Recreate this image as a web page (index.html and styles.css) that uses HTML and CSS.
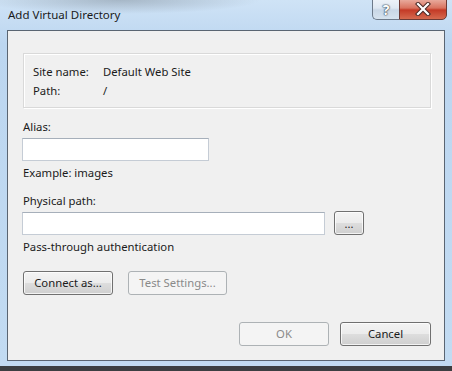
FILE: index.html
```html
<!DOCTYPE html>
<html>
<head>
<meta charset="utf-8">
<link rel="stylesheet" href="styles.css">
</head>
<body>
<div class="window">
  <div class="titlebar">
    <div class="title">Add Virtual Directory</div>
    <div class="caption-buttons">
      <div class="cap-btn help">?</div>
      <div class="cap-btn close">
        <svg width="16" height="14" viewBox="0 0 16 14">
          <path d="M3 2 L13 12 M13 2 L3 12" stroke="#4a2a26" stroke-width="4.2" stroke-linecap="square"/>
          <path d="M3 2 L13 12 M13 2 L3 12" stroke="#ffffff" stroke-width="2.2" stroke-linecap="square"/>
        </svg>
      </div>
    </div>
  </div>
  <div class="client">
    <div class="info">
      <div class="info-label">Site name:</div><div>Default Web Site</div>
      <div class="info-label">Path:</div><div>/</div>
    </div>
    <div class="label alias-label">Alias:</div>
    <div class="textbox alias-box"></div>
    <div class="label example">Example: images</div>
    <div class="label phys-label">Physical path:</div>
    <div class="path-row">
      <div class="textbox path-box"></div>
      <div class="btn browse">...</div>
    </div>
    <div class="label pass">Pass-through authentication</div>
    <div class="btn-row">
      <div class="btn connect">Connect as...</div>
      <div class="btn disabled test">Test Settings...</div>
    </div>
    <div class="footer">
      <div class="btn disabled ok">OK</div>
      <div class="btn cancel">Cancel</div>
    </div>
  </div>
</div>
</body>
</html>
```
FILE: styles.css
```css
html, body {
  margin: 0;
  padding: 0;
}
body {
  width: 452px;
  height: 371px;
  background: #3c3f42;
  overflow: hidden;
  font-family: "Noto Sans", "Open Sans", sans-serif;
  font-size: 11.3px;
  color: #1b1b1b;
}
.window {
  width: 452px;
  height: 366px;
  background:
    radial-gradient(ellipse 140px 14px at 120px 0px, rgba(90,100,110,0.35), rgba(90,100,110,0) 100%),
    linear-gradient(180deg, #cfe3f6 0%, #bcd6f0 12%, #c2dbf2 100%);
  display: flex;
  flex-direction: column;
}
.titlebar {
  height: 30px;
  display: flex;
  justify-content: space-between;
  align-items: flex-start;
}
.title {
  padding-left: 8px;
  line-height: 30px;
  font-size: 11.5px;
  color: #1a1a1a;
}
.caption-buttons {
  display: flex;
  margin-right: 5px;
  margin-top: -2px;
}
.cap-btn {
  height: 20px;
  border: 1px solid #6d7a8a;
  display: flex;
  align-items: center;
  justify-content: center;
}
.help {
  width: 26px;
  border-right: none;
  border-radius: 0 0 0 5px;
  background: linear-gradient(180deg, #eef3f9 0%, #dfe8f2 45%, #c9d7e6 55%, #d6e3ef 100%);
  color: #ffffff;
  font-weight: bold;
  font-size: 14px;
  text-shadow: 0 0 1px #3c4a5a, 0 0 1px #3c4a5a, 0 0 2px #3c4a5a;
}
.close {
  width: 46px;
  border-radius: 0 0 5px 0;
  border-color: #6d3a35;
  background: linear-gradient(180deg, #eab0a3 0%, #d9735f 45%, #c43a26 55%, #d66a4f 100%);
}
.client {
  margin: 0 7px;
  height: 329px;
  border: 1px solid #5a6572;
  background: #f0f0f0;
  padding: 0 13px 0 15px;
  display: flex;
  flex-direction: column;
}
.info {
  margin-top: 22px;
  width: 397px;
  height: 45px;
  border: 1px solid #d9d9d9;
  box-shadow: inset 1px 1px 0 #ffffff, 1px 1px 0 #ffffff;
  padding: 8px 0 0 9px;
  box-sizing: content-box;
  display: grid;
  grid-template-columns: 70px 1fr;
  grid-auto-rows: 19px;
  line-height: 19px;
}
.label {
  line-height: 16px;
  height: 16px;
}
.alias-label { margin-top: 11px; }
.textbox {
  background: #ffffff;
  border: 1px solid #c5ccd5;
  border-top-color: #a6afba;
  box-sizing: border-box;
}
.alias-box {
  margin-top: 3px;
  margin-left: -1px;
  width: 187px;
  height: 23px;
}
.example { margin-top: 4px; }
.phys-label { margin-top: 12px; }
.path-row {
  margin-top: 2px;
  display: flex;
  align-items: flex-start;
  gap: 9px;
}
.path-box {
  margin-left: -1px;
  width: 303px;
  height: 23px;
  margin-top: 1px;
}
.pass { margin-top: 4px; }
.btn {
  height: 24px;
  box-sizing: border-box;
  border: 1px solid #707070;
  border-radius: 3px;
  background: linear-gradient(180deg, #f3f3f3 0%, #ececec 48%, #dddddd 52%, #cfcfcf 100%);
  box-shadow: inset 0 0 0 1px rgba(255,255,255,0.75);
  display: flex;
  align-items: center;
  justify-content: center;
  line-height: 16px;
  color: #1b1b1b;
}
.browse {
  width: 30px;
  font-size: 11px;
  line-height: 10px;
  padding-top: 2px;
}
.btn.disabled {
  border-color: #adb2b5;
  background: #f4f4f4;
  color: #8a8a8a;
  box-shadow: none;
}
.btn-row {
  margin-top: 16px;
  display: flex;
  gap: 15px;
}
.connect { width: 90px; }
.test { width: 99px; }
.footer {
  margin-top: 27px;
  display: flex;
  justify-content: flex-end;
  gap: 11px;
}
.ok { width: 90px; }
.cancel { width: 91px; }
```
